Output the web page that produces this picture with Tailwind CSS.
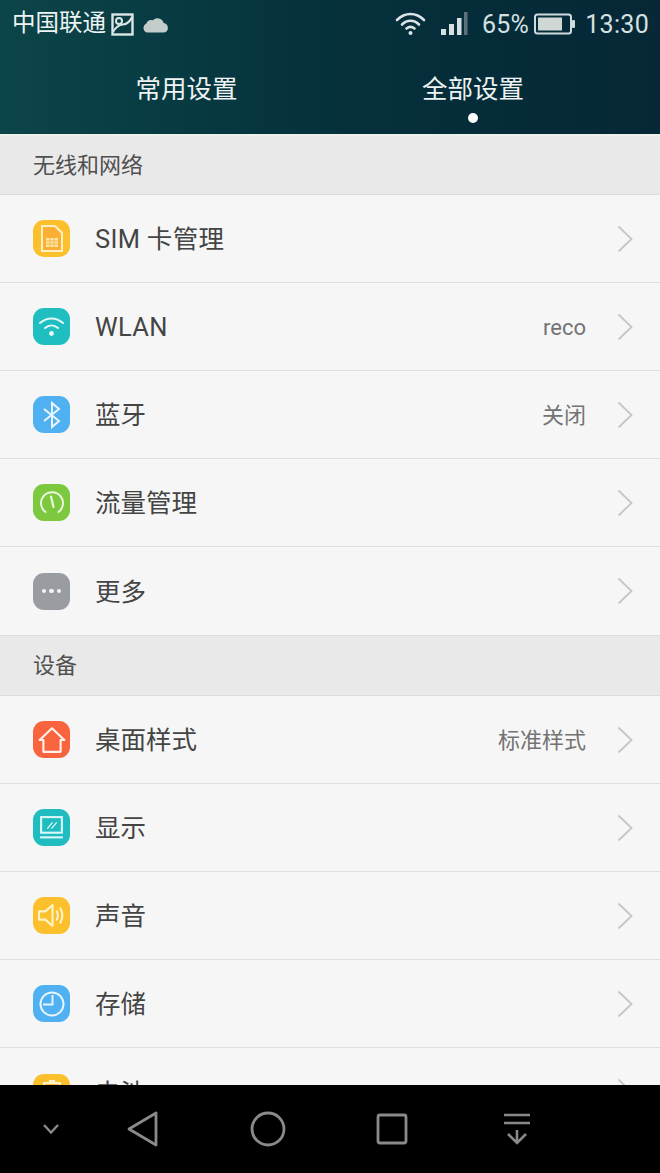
<!DOCTYPE html>
<html lang="zh-CN">
<head>
<meta charset="utf-8">
<script src="https://cdn.jsdelivr.net/npm/@tailwindcss/browser@4"></script>
</head>
<body class="m-0">
<div class="w-[660px] h-[1173px] flex flex-col overflow-hidden bg-[#f6f6f6] font-['Roboto','Noto_Sans_CJK_SC',sans-serif]">
  <header class="h-[134px] shrink-0 flex flex-col bg-gradient-to-r from-[#0c4549] via-[#05313c] to-[#062736] text-[#eef3f3]">
    <div class="h-[48px] flex items-center pl-[12px] pr-[11px] text-[#d5e0e2]">
      <span class="text-[23.5px] leading-none text-[#eef3f3]">中国联通</span>
      <svg class="ml-[5px] w-[23px] h-[23px]" viewBox="0 0 23 23" fill="none" stroke="#dbe6e6" stroke-width="2.4"><rect x="1.5" y="1.5" width="20" height="20"/><circle cx="8" cy="8" r="3" stroke-width="2"/><path d="M2 19 Q6 12 12 11.5 T21 4" stroke-width="2"/></svg>
      <svg class="ml-[8px] w-[27px] h-[19px]" viewBox="0 0 25 17" fill="#c3cdcc"><path d="M5 16 A4.5 4.5 0 0 1 4 7.5 A5 5 0 0 1 10 4.5 A6 6 0 0 1 20 7 A4.6 4.6 0 0 1 20.5 16Z"/></svg>
      <div class="flex-1"></div>
      <svg class="w-[31px] h-[24px]" viewBox="0 0 31 24" fill="none" stroke="#dbe5e7" stroke-width="2.6" stroke-linecap="round"><path d="M2 8 C10 0 21 0 29 8"/><path d="M7 12.5 C12 7.5 19 7.5 24 12.5"/><path d="M11.5 16.5 C14 14.5 17 14.5 19.5 16.5"/><circle cx="15.5" cy="21" r="2" fill="#dbe5e7" stroke="none"/></svg>
      <svg class="ml-[14px] w-[28px] h-[24px]" viewBox="0 0 28 24"><rect x="1" y="17" width="5" height="6" fill="#d6e0e2"/><rect x="9" y="12" width="5" height="11" fill="#d6e0e2"/><rect x="17" y="6" width="4.5" height="17" fill="#d6e0e2"/><rect x="24" y="0" width="3.5" height="23" fill="#5d7278"/></svg>
      <span class="ml-[14px] text-[25px] leading-none tracking-[0.3px]">65%</span>
      <svg class="ml-[5px] w-[42px] h-[22px]" viewBox="0 0 42 22" fill="none"><rect x="1" y="1.5" width="36" height="19" rx="2.5" stroke="#cfdcdf" stroke-width="2"/><rect x="4" y="4.5" width="24" height="13" fill="#d0d8d6"/><rect x="38" y="7" width="3" height="8" rx="1" fill="#cfdcdf"/></svg>
      <span class="ml-[9px] text-[25px] leading-none tracking-[0.3px]">13:30</span>
    </div>
    <nav class="flex-1 relative flex text-[25.5px] leading-none">
      <div class="w-[373px] flex justify-center pt-[29px]">常用设置</div>
      <div class="w-[200px] flex justify-center pt-[29px] relative">全部设置<span class="absolute left-[95px] top-[65px] w-[10px] h-[10px] rounded-full bg-white"></span></div>
    </nav>
  </header>

  <main class="flex-1 min-h-0 overflow-hidden">
    <div class="h-[61px] bg-[#e9e9e9] border-t-[2px] border-t-[#eef0ec] border-b border-b-[#dcdcdc] flex items-center pl-[33px] text-[22px] text-[#505050]">无线和网络</div>

    <div class="h-[88px] flex items-center border-b-[1.5px] border-[#dedede] pl-[33px]">
      <span class="w-[37px] h-[37px] rounded-[11px] bg-[#fcc02c] flex items-center justify-center">
        <svg class="w-[26px] h-[29px]" viewBox="0 0 26 29" fill="none" stroke="#fff0c4" stroke-width="2"><path d="M3 2 H16 L23 9 V27 H3Z" fill="#fbb034"/><path d="M7 14 H19 V23 H7Z" fill="#fde8a8" stroke="none"/><path d="M7 17 H19 M7 20 H19 M11 14 V23 M15 14 V23" stroke="#f4b94a" stroke-width="1"/></svg>
      </span>
      <span class="ml-[25px] pt-[2px] text-[25.5px] text-[#444] tracking-[0.3px]">SIM 卡管理</span>
      <span class="flex-1"></span>
      <svg class="mr-[27px] w-[16px] h-[28px]" viewBox="0 0 16 28" fill="none" stroke="#c6c6c6" stroke-width="1.8"><path d="M1.5 1.5 L14.5 14 L1.5 26.5"/></svg>
    </div>

    <div class="h-[88px] flex items-center border-b-[1.5px] border-[#dedede] pl-[33px]">
      <span class="w-[37px] h-[37px] rounded-[11px] bg-[#1fbfc1] flex items-center justify-center">
        <svg class="w-[27px] h-[22px]" viewBox="0 0 27 22" fill="none" stroke="#e4f9f8" stroke-width="2" stroke-linecap="round"><path d="M2 7 C9 1 18 1 25 7"/><path d="M7 12 C11 8.5 16 8.5 20 12"/><circle cx="13.5" cy="17.5" r="2.4" fill="#e4f9f8" stroke="none"/></svg>
      </span>
      <span class="ml-[25px] pt-[2px] text-[25.5px] text-[#444] tracking-[0.3px]">WLAN</span>
      <span class="flex-1"></span>
      <span class="pt-[2px] text-[22px] text-[#737373]">reco</span>
      <svg class="ml-[31px] mr-[27px] w-[16px] h-[28px]" viewBox="0 0 16 28" fill="none" stroke="#c6c6c6" stroke-width="1.8"><path d="M1.5 1.5 L14.5 14 L1.5 26.5"/></svg>
    </div>

    <div class="h-[88px] flex items-center border-b-[1.5px] border-[#dedede] pl-[33px]">
      <span class="w-[37px] h-[37px] rounded-[11px] bg-[#4fb1f1] flex items-center justify-center">
        <svg class="w-[20px] h-[28px]" viewBox="0 0 20 28" fill="none" stroke="#e8f5fd" stroke-width="2"><path d="M2 8 L17 20 L10 26 V2 L17 8 L2 20"/></svg>
      </span>
      <span class="ml-[25px] pt-[2px] text-[25.5px] text-[#444]">蓝牙</span>
      <span class="flex-1"></span>
      <span class="pt-[2px] text-[22px] text-[#737373]">关闭</span>
      <svg class="ml-[31px] mr-[27px] w-[16px] h-[28px]" viewBox="0 0 16 28" fill="none" stroke="#c6c6c6" stroke-width="1.8"><path d="M1.5 1.5 L14.5 14 L1.5 26.5"/></svg>
    </div>

    <div class="h-[88px] flex items-center border-b-[1.5px] border-[#dedede] pl-[33px]">
      <span class="w-[37px] h-[37px] rounded-[11px] bg-[#7cc83f] flex items-center justify-center">
        <svg class="w-[28px] h-[28px]" viewBox="0 0 28 28" fill="none" stroke="#eaf7dc" stroke-width="2" stroke-linecap="round"><path d="M7.5 23 A11 11 0 1 1 20.5 23"/><path d="M13 7.5 L15.5 18" stroke-width="2.2"/></svg>
      </span>
      <span class="ml-[25px] pt-[2px] text-[25.5px] text-[#444]">流量管理</span>
      <span class="flex-1"></span>
      <svg class="mr-[27px] w-[16px] h-[28px]" viewBox="0 0 16 28" fill="none" stroke="#c6c6c6" stroke-width="1.8"><path d="M1.5 1.5 L14.5 14 L1.5 26.5"/></svg>
    </div>

    <div class="h-[88px] flex items-center pl-[33px]">
      <span class="w-[37px] h-[37px] rounded-[11px] bg-[#999ca1] flex items-center justify-center gap-[3px]">
        <span class="w-[4.5px] h-[4.5px] rounded-full bg-[#f4f4f4]"></span><span class="w-[4.5px] h-[4.5px] rounded-full bg-[#f4f4f4]"></span><span class="w-[4.5px] h-[4.5px] rounded-full bg-[#f4f4f4]"></span>
      </span>
      <span class="ml-[25px] pt-[2px] text-[25.5px] text-[#444]">更多</span>
      <span class="flex-1"></span>
      <svg class="mr-[27px] w-[16px] h-[28px]" viewBox="0 0 16 28" fill="none" stroke="#c6c6c6" stroke-width="1.8"><path d="M1.5 1.5 L14.5 14 L1.5 26.5"/></svg>
    </div>

    <div class="h-[61px] bg-[#e9e9e9] border-t border-t-[#dcdcdc] border-b border-b-[#dcdcdc] flex items-center pl-[33px] text-[22px] text-[#505050]">设备</div>

    <div class="h-[88px] flex items-center border-b-[1.5px] border-[#dedede] pl-[33px]">
      <span class="w-[37px] h-[37px] rounded-[11px] bg-[#f9643f] flex items-center justify-center">
        <svg class="w-[28px] h-[28px]" viewBox="0 0 26 26" fill="none" stroke="#fff0e8" stroke-width="2" stroke-linejoin="round"><path d="M1.5 13 L13 2 L24.5 13 H21 V24 H5 V13Z"/></svg>
      </span>
      <span class="ml-[25px] pt-[2px] text-[25.5px] text-[#444]">桌面样式</span>
      <span class="flex-1"></span>
      <span class="pt-[2px] text-[22px] text-[#737373]">标准样式</span>
      <svg class="ml-[31px] mr-[27px] w-[16px] h-[28px]" viewBox="0 0 16 28" fill="none" stroke="#c6c6c6" stroke-width="1.8"><path d="M1.5 1.5 L14.5 14 L1.5 26.5"/></svg>
    </div>

    <div class="h-[88px] flex items-center border-b-[1.5px] border-[#dedede] pl-[33px]">
      <span class="w-[37px] h-[37px] rounded-[11px] bg-[#1fbdc0] flex items-center justify-center">
        <svg class="w-[27px] h-[27px]" viewBox="0 0 26 26" fill="none" stroke="#dff7f7" stroke-width="2"><rect x="3" y="3" width="20" height="15"/><path d="M9 14 L14 8 M13 14 L18 8" stroke-width="1.2"/><path d="M2 22.5 H24" stroke-width="2"/></svg>
      </span>
      <span class="ml-[25px] pt-[2px] text-[25.5px] text-[#444]">显示</span>
      <span class="flex-1"></span>
      <svg class="mr-[27px] w-[16px] h-[28px]" viewBox="0 0 16 28" fill="none" stroke="#c6c6c6" stroke-width="1.8"><path d="M1.5 1.5 L14.5 14 L1.5 26.5"/></svg>
    </div>

    <div class="h-[88px] flex items-center border-b-[1.5px] border-[#dedede] pl-[33px]">
      <span class="w-[37px] h-[37px] rounded-[11px] bg-[#fcc02c] flex items-center justify-center">
        <svg class="w-[29px] h-[27px]" viewBox="0 0 28 26" fill="none" stroke="#fff2c8" stroke-width="2" stroke-linejoin="round"><path d="M2 9 H8 L15 3 V23 L8 17 H2Z"/><path d="M19 9 Q21.5 13 19 17" stroke-linecap="round"/><path d="M22.5 6 Q26.5 13 22.5 20" stroke-linecap="round"/></svg>
      </span>
      <span class="ml-[25px] pt-[2px] text-[25.5px] text-[#444]">声音</span>
      <span class="flex-1"></span>
      <svg class="mr-[27px] w-[16px] h-[28px]" viewBox="0 0 16 28" fill="none" stroke="#c6c6c6" stroke-width="1.8"><path d="M1.5 1.5 L14.5 14 L1.5 26.5"/></svg>
    </div>

    <div class="h-[88px] flex items-center border-b-[1.5px] border-[#dedede] pl-[33px]">
      <span class="w-[37px] h-[37px] rounded-[11px] bg-[#4fb1f1] flex items-center justify-center">
        <svg class="w-[28px] h-[28px]" viewBox="0 0 28 28" fill="none" stroke="#e6f4fd" stroke-width="2"><circle cx="14" cy="14" r="11.5"/><path d="M14.5 5 V14.5 H5"/></svg>
      </span>
      <span class="ml-[25px] pt-[2px] text-[25.5px] text-[#444]">存储</span>
      <span class="flex-1"></span>
      <svg class="mr-[27px] w-[16px] h-[28px]" viewBox="0 0 16 28" fill="none" stroke="#c6c6c6" stroke-width="1.8"><path d="M1.5 1.5 L14.5 14 L1.5 26.5"/></svg>
    </div>

    <div class="h-[88px] flex items-center pl-[33px]">
      <span class="w-[37px] h-[37px] rounded-[11px] bg-[#fcc02c] flex items-center justify-center">
        <svg class="w-[22px] h-[26px]" viewBox="0 0 22 26" fill="none" stroke="#fff2c8" stroke-width="2"><rect x="3" y="4" width="16" height="20"/><path d="M8 2 H14"/></svg>
      </span>
      <span class="ml-[25px] pt-[2px] text-[25.5px] text-[#444]">电池</span>
      <span class="flex-1"></span>
      <svg class="mr-[27px] w-[16px] h-[28px]" viewBox="0 0 16 28" fill="none" stroke="#c6c6c6" stroke-width="1.8"><path d="M1.5 1.5 L14.5 14 L1.5 26.5"/></svg>
    </div>
  </main>

  <footer class="h-[88px] shrink-0 bg-black relative flex items-center">
    <svg class="ml-[42px] w-[18px] h-[12px]" viewBox="0 0 18 12" fill="none" stroke="#8a8a8a" stroke-width="2.4"><path d="M2 2 L9 9.5 L16 2"/></svg>
    <svg class="ml-[67px] w-[32px] h-[36px]" viewBox="0 0 32 36" fill="none" stroke="#8a8a8a" stroke-width="2.8" stroke-linejoin="round"><path d="M29 2 V34 L2 18Z"/></svg>
    <svg class="ml-[91px] w-[36px] h-[36px]" viewBox="0 0 36 36" fill="none" stroke="#8a8a8a" stroke-width="2.8"><circle cx="18" cy="18" r="16"/></svg>
    <svg class="ml-[90px] w-[32px] h-[32px]" viewBox="0 0 32 32" fill="none" stroke="#8a8a8a" stroke-width="2.8" stroke-linejoin="round"><rect x="2" y="2" width="28" height="28" rx="2"/></svg>
    <svg class="ml-[95px] w-[28px] h-[32px]" viewBox="0 0 28 32" fill="none" stroke="#8a8a8a" stroke-width="2.6"><path d="M1 2 H27 M1 10 H27 M14 17 V30 M5 21 L14 30 L23 21"/></svg>
  </footer>
</div>
</body>
</html>
